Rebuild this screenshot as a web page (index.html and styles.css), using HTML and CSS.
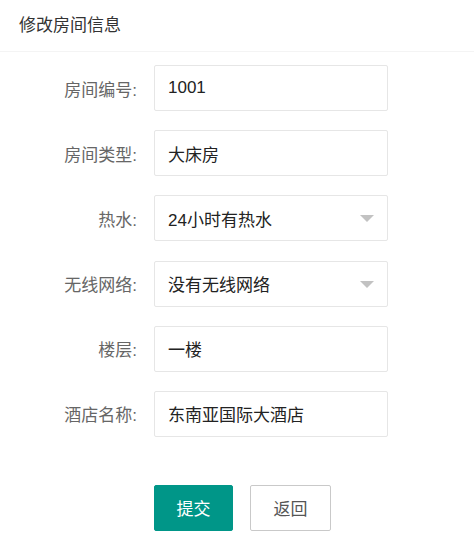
FILE: index.html
```html
<!DOCTYPE html>
<html lang="zh-CN">
<head>
<meta charset="utf-8">
<title>修改房间信息</title>
<link rel="stylesheet" href="styles.css">
</head>
<body>
<div class="card">
  <div class="card-header">修改房间信息</div>
  <form class="form">
    <div class="row">
      <label class="label">房间编号:</label>
      <div class="field"><span class="value">1001</span></div>
    </div>
    <div class="row">
      <label class="label">房间类型:</label>
      <div class="field"><span class="value">大床房</span></div>
    </div>
    <div class="row">
      <label class="label">热水:</label>
      <div class="field select"><span class="value">24小时有热水</span><i class="arrow"></i></div>
    </div>
    <div class="row">
      <label class="label">无线网络:</label>
      <div class="field select"><span class="value">没有无线网络</span><i class="arrow"></i></div>
    </div>
    <div class="row">
      <label class="label">楼层:</label>
      <div class="field"><span class="value">一楼</span></div>
    </div>
    <div class="row">
      <label class="label">酒店名称:</label>
      <div class="field"><span class="value">东南亚国际大酒店</span></div>
    </div>
    <div class="actions">
      <button type="button" class="btn btn-primary">提交</button>
      <button type="button" class="btn btn-default">返回</button>
    </div>
  </form>
</div>
</body>
</html>
```

FILE: styles.css
```css
* { box-sizing: border-box; }
html, body { margin: 0; padding: 0; background: #fff; }
body {
  font-family: "Liberation Sans", "Noto Sans CJK SC", sans-serif;
  font-size: 17px;
  color: #333;
}
.card-header {
  height: 52px;
  line-height: 51px;
  padding-left: 19px;
  border-bottom: 1px solid #f4f4f4;
  color: #333;
  font-size: 17px;
}
.form {
  padding-top: 13px;
  display: flex;
  flex-direction: column;
  gap: 19.2px;
}
.row {
  display: flex;
  align-items: center;
  height: 46px;
}
.label {
  width: 154px;
  padding-right: 17px;
  text-align: right;
  color: #666;
}
.field {
  width: 234px;
  height: 46px;
  border: 1px solid #e6e6e6;
  border-radius: 2px;
  display: flex;
  align-items: center;
  padding-left: 13px;
  position: relative;
  color: #222;
}
.arrow {
  position: absolute;
  right: 13px;
  top: 19px;
  width: 0;
  height: 0;
  border-left: 7px solid transparent;
  border-right: 7px solid transparent;
  border-top: 7px solid #c2c2c2;
}
.actions {
  display: flex;
  gap: 17px;
  padding-left: 154px;
  margin-top: 28.8px;
}
.btn {
  width: 79px;
  height: 46px;
  border-radius: 2px;
  font-family: inherit;
  font-size: 17px;
  padding: 0;
  cursor: pointer;
}
.btn-primary {
  background: #009688;
  border: 1px solid #009688;
  color: #fff;
}
.btn-default {
  width: 81px;
  background: #fff;
  border: 1px solid #c9c9c9;
  color: #555;
}
```
